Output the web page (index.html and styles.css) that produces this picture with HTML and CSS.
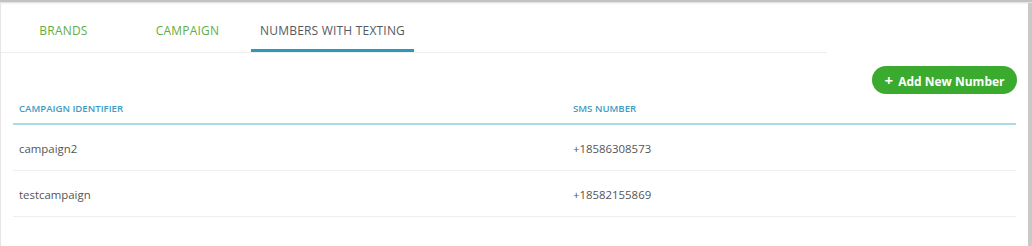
FILE: index.html
```html
<!DOCTYPE html>
<html>
<head>
<meta charset="utf-8">
<link rel="stylesheet" href="styles.css">
</head>
<body>
<div class="frame">
  <div class="panel">
    <nav class="tabs">
      <a class="tab">BRANDS</a>
      <a class="tab">CAMPAIGN</a>
      <a class="tab active">NUMBERS WITH TEXTING</a>
    </nav>
    <div class="toolbar">
      <button class="add-btn"><span class="plus">+</span> Add New Number</button>
    </div>
    <table class="grid">
      <thead>
        <tr><th class="c1">CAMPAIGN IDENTIFIER</th><th class="c2">SMS NUMBER</th></tr>
      </thead>
      <tbody>
        <tr><td>campaign2</td><td>+18586308573</td></tr>
        <tr><td>testcampaign</td><td>+18582155869</td></tr>
      </tbody>
    </table>
  </div>
  <div class="scrollbar"></div>
</div>
</body>
</html>
```

FILE: styles.css
```css
html, body {
  margin: 0;
  padding: 0;
  background: #fff;
  font-family: "Open Sans", "Liberation Sans", sans-serif;
}
.frame {
  display: flex;
  width: 1032px;
  height: 246px;
  box-sizing: border-box;
  border-top: 2px solid #c2c2c2;
  box-shadow: inset 0 1px 2px #d8d8d8;
  overflow: hidden;
}
.panel {
  flex: 1;
  border-left: 1px solid #e6e6e6;
  padding-top: 1px;
}
.scrollbar {
  width: 4px;
  background: #c9c9c9;
  margin-top: 1px;
}
.tabs {
  display: flex;
  gap: 3px;
  width: 826px;
  height: 50px;
  padding-left: 2px;
  border-bottom: 1px solid #eeeeee;
  box-sizing: border-box;
}
.tab {
  min-width: 121px;
  box-sizing: border-box;
  padding: 8px 9px 0;
  display: flex;
  align-items: center;
  justify-content: center;
  white-space: nowrap;
  font-size: 12px;
  color: #5fae45;
  letter-spacing: 0.2px;
  border-bottom: 3px solid transparent;
}
.tab.active {
  color: #555a60;
  border-bottom-color: #2c99b6;
}
.toolbar {
  display: flex;
  justify-content: flex-end;
  padding: 13px 11px 0 0;
}
.add-btn {
  height: 28px;
  width: 145px;
  border: none;
  border-radius: 14px;
  background: #3aab2f;
  color: #fff;
  font-family: "Open Sans", "Liberation Sans", sans-serif;
  font-weight: 700;
  font-size: 12px;
  padding: 0;
}
.plus {
  font-size: 15px;
  font-weight: 700;
  margin-right: 2px;
}
.grid {
  margin-left: 12px;
  width: 1003px;
  border-collapse: collapse;
}
.grid th {
  text-align: left;
  font-size: 9.6px;
  font-weight: 600;
  color: #3d9dc2;
  padding: 0 6px;
  height: 29px;
  border-bottom: 2px solid #a9d9ea;
  vertical-align: middle;
}
.grid th.c1 { width: 542px; }
.grid td {
  font-size: 11.4px;
  color: #555;
  padding: 1px 6px 0;
  height: 44px;
  border-bottom: 1px solid #eeeeee;
}
```
